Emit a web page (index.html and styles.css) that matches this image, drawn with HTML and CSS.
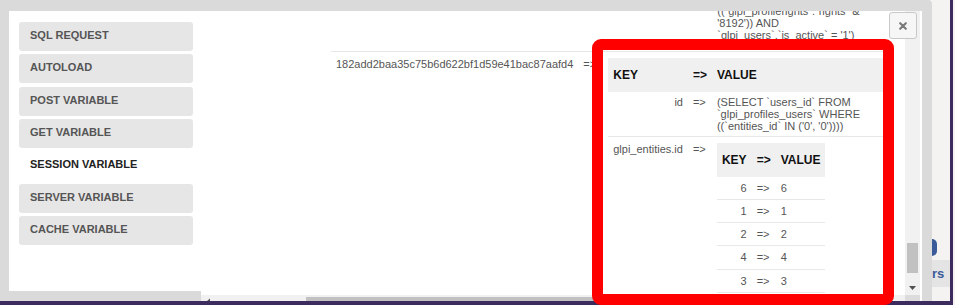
FILE: index.html
```html
<!DOCTYPE html>
<html>
<head>
<meta charset="utf-8">
<link rel="stylesheet" href="styles.css">
</head>
<body>
<div class="viewport">
  <div class="dialog">
    <nav class="tabs">
      <div class="tab">SQL REQUEST</div>
      <div class="tab">AUTOLOAD</div>
      <div class="tab">POST VARIABLE</div>
      <div class="tab">GET VARIABLE</div>
      <div class="tab active">SESSION VARIABLE</div>
      <div class="tab">SERVER VARIABLE</div>
      <div class="tab">CACHE VARIABLE</div>
    </nav>
    <div class="pane">
      <div class="pane-main">
        <div class="pane-view">
          <table class="outer">
            <tr>
              <td></td>
              <td class="oa"></td>
              <td>
                <table class="kv">
                  <tr>
                    <td class="k k-fixed"></td>
                    <td class="a"></td>
                    <td class="v-wide">((`glpi_profilerights`.`rights` &amp; '8192')) AND `glpi_users`.`is_active` = '1')</td>
                  </tr>
                </table>
              </td>
            </tr>
            <tr class="row-b">
              <td>182add2baa35c75b6d622bf1d59e41bac87aafd4</td>
              <td class="oa">=&gt;</td>
              <td>
                <table class="kv">
                  <tr><th>KEY</th><th>=&gt;</th><th>VALUE</th></tr>
                  <tr>
                    <td class="k">id</td>
                    <td class="a">=&gt;</td>
                    <td class="v-wide">(SELECT `users_id` FROM `glpi_profiles_users` WHERE ((`entities_id` IN ('0', '0'))))</td>
                  </tr>
                  <tr class="pt6">
                    <td class="k">glpi_entities.id</td>
                    <td class="a">=&gt;</td>
                    <td class="v-wide">
                      <table class="kv small">
                        <tr><th>KEY</th><th>=&gt;</th><th>VALUE</th></tr>
                        <tr><td class="k">6</td><td class="a">=&gt;</td><td>6</td></tr>
                        <tr><td class="k">1</td><td class="a">=&gt;</td><td>1</td></tr>
                        <tr><td class="k">2</td><td class="a">=&gt;</td><td>2</td></tr>
                        <tr><td class="k">4</td><td class="a">=&gt;</td><td>4</td></tr>
                        <tr><td class="k">3</td><td class="a">=&gt;</td><td>3</td></tr>
                      </table>
                    </td>
                  </tr>
                </table>
              </td>
            </tr>
          </table>
        </div>
        <div class="vscroll">
          <div class="vs-thumb"></div>
          <div class="vs-down">
            <svg width="7" height="4" viewBox="0 0 7 4"><polygon points="0,0 7,0 3.5,4" fill="#505050"/></svg>
          </div>
        </div>
      </div>
      <div class="hscroll">
        <div class="hs-left">
          <svg width="15" height="6" viewBox="0 0 15 6"><polygon points="6,6 9,3.5 9,6" fill="#505050"/></svg>
        </div>
        <div class="hs-track"><div class="hs-thumb"></div></div>
        <div class="hs-corner"></div>
      </div>
    </div>
  </div>
  <div class="peek">
    <div class="peek-circle"></div>
    <div class="peek-band">rs</div>
  </div>
</div>
<button class="close" type="button" aria-label="close">
  <svg width="8" height="8" viewBox="0 0 8 8"><path d="M1.2 1.2 L6.8 6.8 M6.8 1.2 L1.2 6.8" stroke="#7a7a7a" stroke-width="2.1" stroke-linecap="round"/></svg>
</button>
<div class="annotation"></div>
</body>
</html>
```
FILE: styles.css
```css
html, body {
  margin: 0;
  padding: 0;
}
body {
  width: 955px;
  height: 305px;
  overflow: hidden;
  position: relative;
  background: #f4f3f1;
  font-family: "Liberation Sans", Arial, sans-serif;
}
.viewport {
  width: 950px;
  height: 301px;
  border-right: 3px solid #3d2b5e;
  border-bottom: 4px solid #3d2b5e;
  display: flex;
}
.dialog {
  flex: none;
  width: 932px;
  height: 301px;
  box-sizing: border-box;
  background: #dadada;
  border-top-right-radius: 4px;
  padding: 11px 10px 0 9px;
  display: flex;
}
.tabs {
  flex: none;
  width: 192px;
  height: 280px;
  box-sizing: border-box;
  background: #fff;
  padding: 11px 8px 0 10px;
}
.tab {
  height: 29px;
  box-sizing: border-box;
  margin-bottom: 3.33px;
  padding: 7px 11px 0;
  background: #e6e6e6;
  border-radius: 3px;
  font-size: 11px;
  font-weight: bold;
  color: #555;
  white-space: nowrap;
}
.tab.active {
  background: transparent;
  color: #222;
}
.pane {
  flex: 1;
  min-width: 0;
  height: 290px;
  display: flex;
  flex-direction: column;
  background: #fff;
}
.pane-main {
  display: flex;
  height: 284px;
  padding-right: 2px;
}
.pane-view {
  flex: 1;
  min-width: 0;
  overflow: hidden;
}
.vscroll {
  flex: none;
  width: 15px;
  background: #f1f1f1;
  display: flex;
  flex-direction: column;
  justify-content: flex-end;
  align-items: center;
}
.vs-thumb {
  width: 11px;
  height: 30px;
  background: #c1c1c1;
  margin-bottom: 7px;
}
.vs-down {
  width: 15px;
  height: 15px;
  display: flex;
  align-items: center;
  justify-content: center;
}
.vs-down svg { display: block; }
.hscroll {
  display: flex;
  height: 6px;
  overflow: hidden;
  background: #f1f1f1;
  margin-right: 2px;
}
.hs-left {
  flex: none;
  width: 15px;
}
.hs-left svg { display: block; }
.hs-track {
  flex: 1;
  padding-top: 2px;
}
.hs-thumb {
  margin-left: 90px;
  width: 554px;
  height: 11px;
  background: #c1c1c1;
}
.hs-corner {
  flex: none;
  width: 15px;
  background: #dcdcdc;
}

/* tables */
.outer, .kv {
  border-collapse: separate;
  border-spacing: 0;
}
.outer {
  margin: -15.5px 0 0 130px;
  font-size: 11px;
  color: #555;
}
.outer > tbody > tr > td {
  padding: 5px;
  vertical-align: top;
  border-bottom: 1px solid #e8e8e8;
  white-space: nowrap;
}
.outer > tbody > tr > td.oa {
  padding-right: 7px;
}
.outer > tbody > tr.row-b > td {
  padding-top: 6px;
}
.kv th {
  background: #f0f0f0;
  padding: 10px 5px;
  font-size: 12px;
  font-weight: bold;
  color: #111;
  text-align: left;
  white-space: nowrap;
}
.kv td {
  padding: 4px 5px;
  vertical-align: top;
  border-bottom: 1px solid #e8e8e8;
  font-size: 11px;
  color: #555;
  white-space: normal;
}
.kv td.k {
  text-align: right;
  white-space: nowrap;
}
.kv td.k-fixed {
  width: 70px;
}
.kv td.a {
  width: 14px;
  white-space: nowrap;
}
.kv td.v-wide {
  width: 165px;
}
.kv tr.pt6 > td {
  padding-top: 6px;
}
.kv.small td {
  line-height: 14.25px;
}

/* page behind the dialog */
.peek {
  flex: 1;
  display: flex;
  flex-direction: column;
}
.peek-circle {
  margin-top: 239px;
  width: 5px;
  height: 17px;
  background: #3b5a9a;
  border-radius: 0 9px 9px 0;
}
.peek-band {
  margin-top: 4px;
  height: 27px;
  background: #e4e4e4;
  color: #3b5a9a;
  font-size: 13px;
  font-weight: bold;
  line-height: 27px;
  overflow: hidden;
  white-space: nowrap;
}

/* overlays */
.close {
  position: absolute;
  left: 889px;
  top: 12px;
  width: 28px;
  height: 27px;
  box-sizing: border-box;
  margin: 0;
  padding: 0;
  border: 1px solid #c8c8c8;
  border-radius: 3px;
  background: #f6f6f6;
  display: flex;
  align-items: center;
  justify-content: center;
}
.close svg { display: block; }
.annotation {
  position: absolute;
  left: 592px;
  top: 39px;
  width: 302px;
  height: 266px;
  box-sizing: border-box;
  border: 11px solid #ff0000;
  border-radius: 9px;
  pointer-events: none;
}
```
